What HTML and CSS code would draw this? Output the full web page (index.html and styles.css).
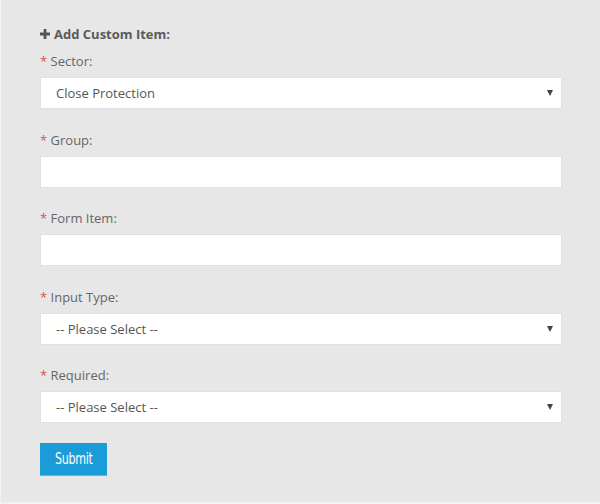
FILE: index.html
```html
<!DOCTYPE html>
<html>
<head>
<meta charset="utf-8">
<link rel="stylesheet" href="styles.css">
</head>
<body>
<div class="panel">
  <form class="form">
    <div class="heading"><svg class="plus" viewBox="0 0 10 10" width="10" height="10"><path d="M3.6 0h2.8v3.6H10v2.8H6.4V10H3.6V6.4H0V3.6h3.6z" fill="#555"/></svg>Add Custom Item:</div>

    <div class="field">
      <label class="label"><span class="req">*</span> Sector:</label>
      <div class="select-wrap">
        <select class="control"><option>Close Protection</option></select>
        <span class="arrow"></span>
      </div>
    </div>

    <div class="field">
      <label class="label"><span class="req">*</span> Group:</label>
      <input class="control" type="text">
    </div>

    <div class="field">
      <label class="label"><span class="req">*</span> Form Item:</label>
      <input class="control" type="text">
    </div>

    <div class="field">
      <label class="label"><span class="req">*</span> Input Type:</label>
      <div class="select-wrap">
        <select class="control"><option>-- Please Select --</option></select>
        <span class="arrow"></span>
      </div>
    </div>

    <div class="field">
      <label class="label"><span class="req">*</span> Required:</label>
      <div class="select-wrap">
        <select class="control"><option>-- Please Select --</option></select>
        <span class="arrow"></span>
      </div>
    </div>

    <button class="submit" type="button"><span class="submit-text">Submit</span></button>
  </form>
</div>
</body>
</html>
```

FILE: styles.css
```css
html, body {
  margin: 0;
  padding: 0;
  background: #f2f2f2;
}
body {
  font-family: "Open Sans", "Liberation Sans", sans-serif;
  width: 600px;
  height: 504px;
}
.panel {
  margin-left: 1px;
  height: 502px;
  background: #e7e7e7;
  box-sizing: border-box;
  padding: 24px 38px 0 39px;
}
.form {
  display: flex;
  flex-direction: column;
}
.heading {
  display: flex;
  align-items: center;
  gap: 4px;
  font-size: 13px;
  font-weight: 700;
  color: #5a5a5a;
  line-height: 20px;
  height: 20px;
  margin-bottom: 7px;
}
.plus {
  display: block;
}
.field {
  display: flex;
  flex-direction: column;
  margin-bottom: 20.5px;
}
.label {
  font-size: 13px;
  line-height: 20px;
  color: #666;
  margin-bottom: 6px;
}
.req {
  color: #d9534f;
}
.select-wrap {
  position: relative;
}
.control {
  display: block;
  width: 100%;
  box-sizing: border-box;
  height: 32px;
  border: 1px solid #e1e1e1;
  background: #fff;
  font-family: "Open Sans", "Liberation Sans", sans-serif;
  font-size: 13px;
  color: #555;
  padding: 0 15px;
  margin: 0;
  border-radius: 0;
  outline: none;
  -webkit-appearance: none;
  appearance: none;
}
.arrow {
  position: absolute;
  right: 9px;
  top: 13px;
  width: 0;
  height: 0;
  border-left: 3.5px solid transparent;
  border-right: 3.5px solid transparent;
  border-top: 6px solid #444;
  pointer-events: none;
}
.submit {
  align-self: flex-start;
  margin-top: -1px;
  width: 67px;
  height: 33px;
  border: none;
  border-bottom: 1px solid #5fb4dc;
  background: #1b9bd7;
  color: #fff;
  padding: 0;
  display: flex;
  align-items: center;
  justify-content: center;
}
.submit-text {
  display: inline-block;
  font-family: "DejaVu Sans Condensed", "DejaVu Sans", sans-serif;
  font-size: 15px;
  letter-spacing: -0.4px;
  transform: scaleX(0.82);
}
```
